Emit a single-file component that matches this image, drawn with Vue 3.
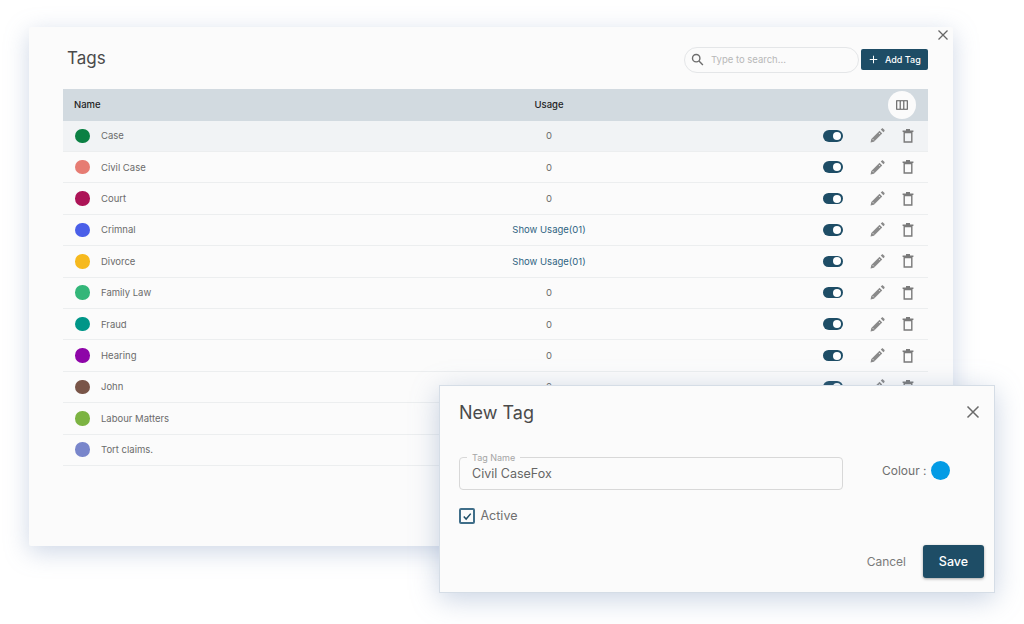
<script setup>
const tags = [
  { name: 'Case', color: '#0b8043', usage: '0' },
  { name: 'Civil Case', color: '#e67c73', usage: '0' },
  { name: 'Court', color: '#ad1457', usage: '0' },
  { name: 'Crimnal', color: '#4a5fe8', usage: 'Show Usage(01)', link: true },
  { name: 'Divorce', color: '#f6b91d', usage: 'Show Usage(01)', link: true },
  { name: 'Family Law', color: '#33b679', usage: '0' },
  { name: 'Fraud', color: '#009688', usage: '0' },
  { name: 'Hearing', color: '#8e05a8', usage: '0' },
  { name: 'John', color: '#795548', usage: '0' },
  { name: 'Labour Matters', color: '#7cb342', usage: '0' },
  { name: 'Tort claims.', color: '#7986cb', usage: '0' }
]
</script>

<template>
  <div class="page">
    <section class="card">
      <svg class="card-close" viewBox="0 0 12 12"><path d="M1.5 1.5l9 9M10.5 1.5l-9 9" /></svg>
      <header class="top">
        <h1 class="title">Tags</h1>
        <div class="tools">
          <div class="search">
            <svg class="search-icon" viewBox="0 0 14 14"><circle cx="5.6" cy="5.6" r="4" /><path d="M8.6 8.6l4.2 4.2" /></svg>
            <span>Type to search...</span>
          </div>
          <button class="add">
            <svg viewBox="0 0 10 10"><path d="M5 .8v8.4M.8 5h8.4" /></svg>
            Add Tag
          </button>
        </div>
      </header>

      <div class="table">
        <div class="row head">
          <div class="cell-name">Name</div>
          <div class="cell-usage">Usage</div>
          <div class="cell-actions">
            <span class="col-btn">
              <svg viewBox="0 0 12 10"><path d="M.7.7h10.6v8.6H.7zM4.2.7v8.6M7.8.7v8.6" /></svg>
            </span>
          </div>
        </div>
        <div v-for="(t, i) in tags" :key="t.name" class="row" :class="{ first: i === 0 }">
          <div class="cell-name">
            <span class="dot" :style="{ background: t.color }"></span>
            {{ t.name }}
          </div>
          <div class="cell-usage" :class="{ link: t.link }">{{ t.usage }}</div>
          <div class="cell-actions">
            <span class="toggle"><i></i></span>
            <svg class="pencil" viewBox="0 0 14 14">
              <path class="solid" d="M.5 13.5l.7-3.2L8.9 2.6l2.5 2.5-7.7 7.7z" />
              <path class="line" d="M2.5 10.4l1.1 1.1M8.3 4.6l1.1 1.1" />
              <path class="solid" d="M10 1.5l.9-.9c.4-.4 1-.4 1.4 0l1.1 1.1c.4.4.4 1 0 1.4l-.9.9z" />
            </svg>
            <svg class="trash" viewBox="0 0 12 14">
              <path d="M2.2 3.6h7.6v9.4H2.2zM.6 2.2h10.8M4 .8h4" />
            </svg>
          </div>
        </div>
      </div>
    </section>

    <section class="modal">
      <div class="modal-head">
        <h2>New Tag</h2>
        <svg class="modal-close" viewBox="0 0 14 14"><path d="M1.5 1.5l11 11M12.5 1.5l-11 11" /></svg>
      </div>
      <div class="form-row">
        <div class="field">
          <span class="legend">Tag Name</span>
          Civil CaseFox
        </div>
        <div class="colour">
          Colour :
          <span class="swatch"></span>
        </div>
      </div>
      <label class="check">
        <span class="box">
          <svg viewBox="0 0 12 12"><path d="M2 6.4l2.7 2.8L10 3" /></svg>
        </span>
        Active
      </label>
      <div class="modal-foot">
        <span class="cancel">Cancel</span>
        <button class="save">Save</button>
      </div>
    </section>
  </div>
</template>

<style>
html, body { margin: 0; background: #fff; }
</style>

<style scoped>
* { box-sizing: border-box; }
.page {
  position: relative;
  width: 1024px;
  height: 624px;
  overflow: hidden;
  padding: 27px 71px 0 29px;
  background: #fff;
  font-family: "Inter", "Open Sans", "Liberation Sans", sans-serif;
  color: #5b5b5b;
}
.card {
  position: relative;
  height: 519px;
  padding: 0 25px 0 34px;
  background: #fbfbfb;
  border-radius: 2px;
  box-shadow: 0 6px 24px rgba(120, 145, 185, .36);
}
.card-close {
  position: absolute;
  top: 2px;
  right: 4px;
  width: 12px;
  height: 12px;
  fill: none;
  stroke: #666;
  stroke-width: 1.3;
}
.top {
  display: flex;
  justify-content: space-between;
  align-items: flex-start;
  height: 62px;
  padding-top: 20px;
}
.title {
  margin: 0 0 0 4px;
  font-size: 17px;
  line-height: 22px;
  font-weight: 400;
  color: #4a4a4a;
}
.tools { display: flex; gap: 2px; }
.search {
  display: flex;
  align-items: center;
  gap: 7px;
  width: 175px;
  height: 26px;
  padding-left: 6px;
  padding-bottom: 1px;
  border: 1px solid #e4e6e8;
  border-radius: 13px;
  font-size: 9.5px;
  color: #b8b8b8;
}
.search-icon {
  width: 13px;
  height: 13px;
  fill: none;
  stroke: #6d6d6d;
  stroke-width: 1.5;
}
.add {
  display: flex;
  align-items: center;
  gap: 7px;
  width: 67px;
  height: 21px;
  margin-top: 2px;
  padding: 0 0 0 8px;
  border: 0;
  border-radius: 2px;
  background: #1e4d66;
  color: #fff;
  font: 500 9px "Inter", "Open Sans", sans-serif;
  white-space: nowrap;
}
.add svg {
  width: 9px;
  height: 9px;
  flex: none;
  fill: none;
  stroke: #fff;
  stroke-width: 1.1;
}
.table { width: 865px; }
.row {
  display: grid;
  grid-template-columns: 346px 280px 1fr;
  align-items: center;
  height: 31.4px;
  border-bottom: 1px solid #eceeef;
  font-size: 9.5px;
  color: #6b6b6b;
}
.row.first { background: #f1f3f5; }
.row.head {
  height: 31.6px;
  border: 0;
  background: #d2dae0;
  color: #222;
  font-weight: 500;
}
.cell-name {
  display: flex;
  align-items: center;
  padding-left: 12px;
}
.head .cell-name { padding-left: 11px; }
.cell-usage { text-align: center; }
.link { color: #2f6482; }
.cell-actions {
  display: flex;
  align-items: center;
  justify-content: flex-end;
  padding-right: 14px;
}
.head .cell-actions { padding-right: 12px; }
.col-btn {
  display: flex;
  align-items: center;
  justify-content: center;
  width: 28px;
  height: 28px;
  border-radius: 50%;
  background: #fbfbfb;
}
.col-btn svg {
  width: 12px;
  height: 10px;
  fill: none;
  stroke: #5c5c5c;
  stroke-width: 1.1;
}
.dot {
  width: 14.5px;
  height: 14.5px;
  margin-right: 11.5px;
  border-radius: 50%;
}
.toggle {
  position: relative;
  width: 20px;
  height: 11.5px;
  margin-right: 27px;
  border-radius: 6px;
  background: #1e4d66;
}
.toggle i {
  position: absolute;
  top: 1.75px;
  right: 1.75px;
  width: 8px;
  height: 8px;
  border-radius: 50%;
  background: #fff;
}
.pencil {
  width: 15px;
  height: 15px;
  margin-right: 17px;
}
.pencil .solid { fill: #8a8a8a; }
.pencil .line { fill: none; stroke: #fbfbfb; stroke-width: .7; }
.trash {
  width: 12px;
  height: 14px;
  fill: none;
  stroke: #7a7a7a;
  stroke-width: 1.4;
}
.modal {
  position: absolute;
  left: 439px;
  top: 385px;
  width: 556px;
  height: 208px;
  padding: 0 13px 0 19px;
  background: #fbfbfb;
  border: 1px solid #d5dde6;
  box-shadow: 0 6px 26px rgba(120, 145, 185, .4);
}
.modal-head {
  display: flex;
  justify-content: space-between;
  align-items: center;
  height: 52px;
  padding-right: 1px;
}
.modal-head h2 {
  margin: 0;
  font-size: 18px;
  font-weight: 400;
  color: #4a4a4a;
}
.modal-close {
  width: 14px;
  height: 14px;
  fill: none;
  stroke: #6a6a6a;
  stroke-width: 1.5;
}
.form-row {
  display: flex;
  align-items: center;
  margin-top: 19px;
}
.field {
  position: relative;
  display: flex;
  align-items: center;
  width: 384px;
  height: 33px;
  padding-left: 12px;
  border: 1px solid #d8d8d8;
  border-radius: 4px;
  font-size: 12.5px;
  color: #666;
}
.legend {
  position: absolute;
  left: 7px;
  top: -6px;
  padding: 0 5px;
  background: #fbfbfb;
  font-size: 9px;
  line-height: 11px;
  color: #a5a5a5;
}
.colour {
  display: flex;
  align-items: center;
  gap: 4px;
  margin: -6px 0 0 39px;
  font-size: 12px;
  color: #6f6f6f;
}
.swatch {
  width: 19px;
  height: 19px;
  border-radius: 50%;
  background: #039be5;
}
.check {
  display: flex;
  align-items: center;
  gap: 6px;
  margin-top: 18px;
  font-size: 12.5px;
  color: #6f6f6f;
}
.box {
  display: flex;
  width: 15.5px;
  height: 15.5px;
  padding: .5px;
  border: 2px solid #3f6e89;
  border-radius: 2px;
}
.box svg {
  fill: none;
  stroke: #1e4d66;
  stroke-width: 1.7;
}
.modal-foot {
  position: absolute;
  right: 10px;
  bottom: 14px;
  display: flex;
  align-items: center;
  gap: 17px;
}
.cancel { font-size: 12px; color: #7a7a7a; }
.save {
  width: 61px;
  height: 33px;
  border: 0;
  border-radius: 3px;
  background: #1e4d66;
  color: #fff;
  font: 500 12.5px "Inter", "Open Sans", sans-serif;
  box-shadow: 0 1px 3px rgba(0, 0, 0, .35);
}
</style>
